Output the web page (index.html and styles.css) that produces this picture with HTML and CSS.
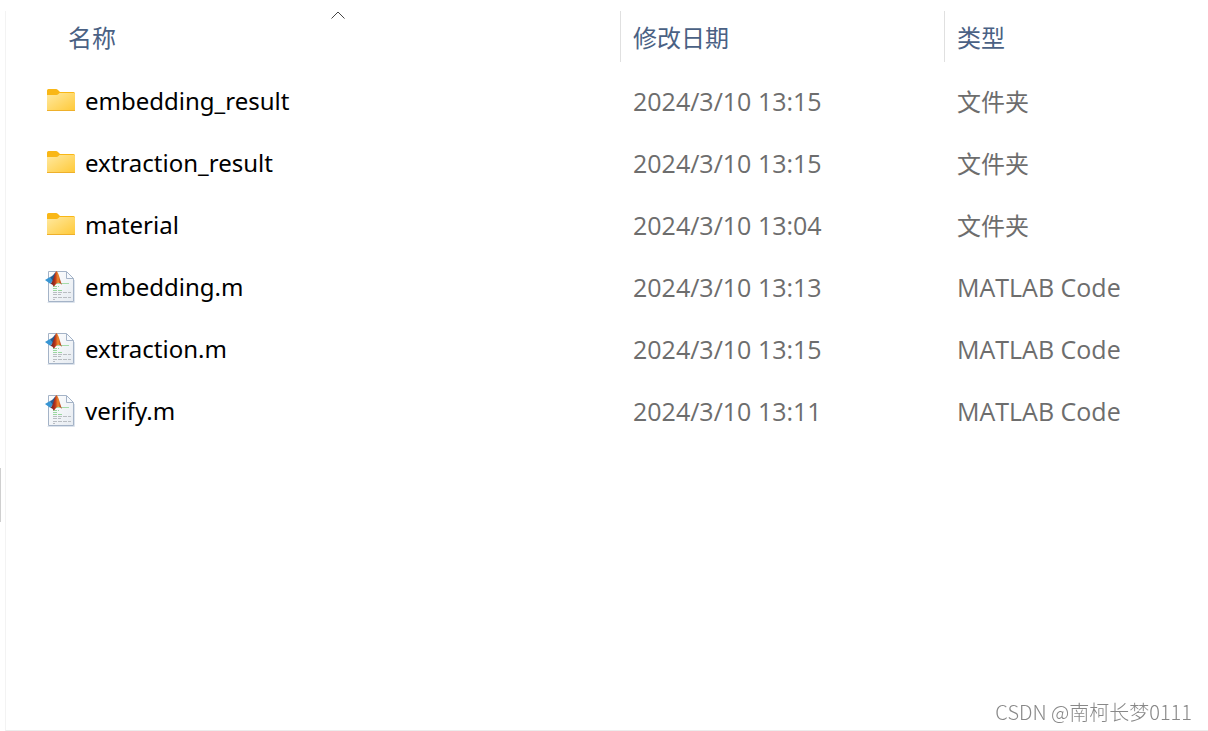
FILE: index.html
```
<!DOCTYPE html>
<html lang="zh-CN">

<head>
    <meta charset="UTF-8" />
    <meta name="viewport" content="width=device-width, initial-scale=1" />
    <title>文件列表</title>
    <link rel="stylesheet" href="styles.css">
</head>

<body>
    <!-- shared icons -->
    <svg class="sprite" aria-hidden="true">
        <defs>
            <linearGradient id="folder-front" x1="0" y1="0" x2="1" y2="1">
                <stop offset="0" stop-color="#ffe9a0" />
                <stop offset="1" stop-color="#ffc937" />
            </linearGradient>
            <linearGradient id="paper" x1="0" y1="0" x2="1" y2="1">
                <stop offset="0" stop-color="#ffffff" />
                <stop offset="1" stop-color="#e6ebf1" />
            </linearGradient>
            <linearGradient id="peak" x1="0" y1="0" x2="1" y2="0">
                <stop offset="0" stop-color="#5a1f28" />
                <stop offset="0.4" stop-color="#b8321a" />
                <stop offset="0.65" stop-color="#f28a2c" />
                <stop offset="1" stop-color="#a52a1c" />
            </linearGradient>
        </defs>
        <symbol id="icon-folder" viewBox="0 0 30 34">
            <path d="M1 6.500Q1 5 2.500 5H10Q11 5 12 6L14 8H27.500Q29 8 29 9.500V13H1Z" fill="#f9b716" />
            <path d="M1 11H10.500Q11.500 11 12.500 10L13.500 9H28Q29 9 29 10V26Q29 27 28 27H2Q1 27 1 26Z" fill="url(#folder-front)" />
            <path d="M1 26.500H29" stroke="#eeb02b" />
        </symbol>
        <symbol id="icon-matlab" viewBox="0 0 30 34">
            <path d="M2.500 1.500H20L27.500 9V31.500H2.500Z" fill="url(#paper)" stroke="#a4b3c7" />
            <path d="M1.500 32.500H28.500V10" fill="none" stroke="#dce3ec" />
            <path d="M20.500 1.500V8.500H27.500Z" fill="#f6f9fd" stroke="#a4b3c7" />
            <path d="M8 13.500H23" stroke="#a5dba9" />
            <path d="M7 16.500H13M7 18.500H12M7 20.500H17" stroke="#9ad79f" stroke-dasharray="4 1" />
            <path d="M7 22.500H25M7 24.500H15M7 27.500H25M7 29.500H9" stroke="#b9bdc2" stroke-dasharray="4 1" />
            <path d="M-1 10L4 7L8 9L4.500 14Z" fill="#3795d3" />
            <path d="M4 7C6.500 6.500 8 4 9.500 2L10 6L7 11Z" fill="#285b8f" />
            <path d="M4.500 14C7.500 11 8.500 2.500 10.500 1C12.500 2 14 10 16 15C14 13 12.500 12 10.500 13.500C9.500 14.300 9 16 7.500 16.500C7 15 6 13.800 4.500 14Z" fill="url(#peak)" />
        </symbol>
    </svg>

    <div class="explorer">
        <aside class="side-pane">
            <div class="side-thumb"></div>
        </aside>

        <main class="file-pane">
            <table class="file-list">
                <colgroup>
                    <col>
                    <col class="col-date">
                    <col class="col-type">
                </colgroup>
                <thead>
                    <tr>
                        <th class="name-head" scope="col" aria-sort="ascending">
                            <button class="sort" type="button">名称
                                <svg class="sort-arrow" viewBox="0 0 14 8" aria-hidden="true">
                                    <path d="M0.500 7.500L7 1L13.500 7.500" fill="none" stroke="#444" />
                                </svg>
                            </button>
                        </th>
                        <th scope="col"><button class="sort" type="button">修改日期</button></th>
                        <th scope="col"><button class="sort" type="button">类型</button></th>
                    </tr>
                </thead>
                <tbody>
                    <tr>
                        <td><div class="file"><svg class="icon"><use href="#icon-folder" /></svg>embedding_result</div></td>
                        <td>2024/3/10 13:15</td>
                        <td class="cjk">文件夹</td>
                    </tr>
                    <tr>
                        <td><div class="file"><svg class="icon"><use href="#icon-folder" /></svg>extraction_result</div></td>
                        <td>2024/3/10 13:15</td>
                        <td class="cjk">文件夹</td>
                    </tr>
                    <tr>
                        <td><div class="file"><svg class="icon"><use href="#icon-folder" /></svg>material</div></td>
                        <td>2024/3/10 13:04</td>
                        <td class="cjk">文件夹</td>
                    </tr>
                    <tr>
                        <td><div class="file"><svg class="icon"><use href="#icon-matlab" /></svg>embedding.m</div></td>
                        <td>2024/3/10 13:13</td>
                        <td>MATLAB Code</td>
                    </tr>
                    <tr>
                        <td><div class="file"><svg class="icon"><use href="#icon-matlab" /></svg>extraction.m</div></td>
                        <td>2024/3/10 13:15</td>
                        <td>MATLAB Code</td>
                    </tr>
                    <tr>
                        <td><div class="file"><svg class="icon"><use href="#icon-matlab" /></svg>verify.m</div></td>
                        <td>2024/3/10 13:11</td>
                        <td>MATLAB Code</td>
                    </tr>
                </tbody>
            </table>
        </main>
    </div>

    <div class="watermark">CSDN @南柯长梦0111</div>
</body>

</html>
```
FILE: styles.css
```
* {
    margin: 0;
    padding: 0;
    box-sizing: border-box;
}

body {
    background-color: #fff;
    color: #6d6d6d;
    font-family: 'Open Sans', 'Noto Sans CJK SC', sans-serif;
    font-size: 25px;
}

.sprite {
    position: absolute;
    width: 0;
    height: 0;
}

.explorer {
    display: flex;
    min-height: 100vh;
    padding-top: 11px;
}

.side-pane {
    width: 5px;
    padding-top: 457px;
}

.side-thumb {
    width: 1px;
    height: 54px;
    background-color: #cfcfcf;
}

.file-pane {
    flex: 1;
    border-left: 1px solid #f3f3f3;
    border-bottom: 1px solid #ececec;
}

.file-list {
    width: 100%;
    table-layout: fixed;
    border-collapse: separate;
    border-spacing: 0;
}

.col-date {
    width: 324px;
}

.col-type {
    width: 264px;
}

.file-list th {
    height: 51px;
    border-left: 1px solid #e0e0e0;
}

.file-list .name-head {
    border-left: none;
    padding-left: 50px;
}

.sort {
    position: relative;
    display: block;
    width: 100%;
    height: 51px;
    padding-left: 12px;
    border: none;
    background: none;
    color: #4a6184;
    font-family: inherit;
    font-size: 24px;
    text-align: left;
    cursor: pointer;
}

.sort-arrow {
    position: absolute;
    top: 0;
    left: 50%;
    width: 14px;
    height: 8px;
    transform: translateX(-50%);
}

tbody::before {
    content: "";
    display: block;
    height: 8px;
}

.file-list td {
    height: 62px;
    padding-left: 13px;
    line-height: 34px;
    white-space: nowrap;
}

.file-list td:first-child {
    padding-left: 40px;
    color: #000;
    font-family: 'Noto Sans', 'Noto Sans CJK SC', sans-serif;
    font-size: 24px;
}

.file-list .cjk {
    padding-top: 2px;
    font-size: 24px;
}

.file {
    display: flex;
    align-items: center;
    gap: 9px;
}

.icon {
    width: 30px;
    height: 34px;
    overflow: visible;
}

#icon-matlab {
    overflow: visible;
}

tbody tr:hover {
    background-color: #e5f3ff;
}

.watermark {
    position: fixed;
    right: 16px;
    bottom: 4px;
    color: #888;
    font-family: 'Noto Sans CJK SC', sans-serif;
    font-size: 20px;
    font-weight: 300;
    line-height: 30px;
}
```
